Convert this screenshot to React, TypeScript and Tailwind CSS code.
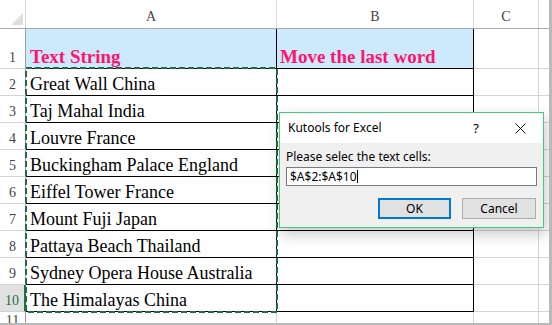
import * as React from 'react';

const rows = [
  'Great Wall China',
  'Taj Mahal India',
  'Louvre France',
  'Buckingham Palace England',
  'Eiffel Tower France',
  'Mount Fuji Japan',
  'Pattaya Beach Thailand',
  'Sydney Opera House Australia',
  'The Himalayas China',
];

function RowHead({ n, active = false }: { n: number; active?: boolean }) {
  return (
    <div
      className={
        active
          ? 'w-[26px] shrink-0 flex items-end justify-center pb-[2px] border-b border-[#d4d4d4] border-r-2 border-r-[#217346] bg-[#e1e1e1] text-[#217346]'
          : 'w-[26px] shrink-0 flex items-end justify-center pb-[2px] border-b border-[#d4d4d4] border-r border-r-[#9f9f9f] text-[#444]'
      }
    >
      <span className="text-[14px] leading-[16px]">{n}</span>
    </div>
  );
}

function Dialog() {
  return (
    <div className="absolute left-[279px] top-[112px] w-[265px] h-[116px] flex flex-col border border-[#3fca7c] bg-[#f0f0f0] shadow-[2px_6px_14px_rgba(0,0,0,0.22)] font-['Noto_Sans',sans-serif] text-[12px] text-black">
      <div className="h-[30px] shrink-0 flex items-center bg-white pl-[8px]">
        <span className="flex-1 leading-none">Kutools for Excel</span>
        <span className="w-[10px] text-center text-[13px] leading-none mr-[34px]">?</span>
        <svg width="11" height="11" viewBox="0 0 11 11" className="mr-[17px]">
          <path d="M0.5 0.5 L10.5 10.5 M10.5 0.5 L0.5 10.5" stroke="#111" strokeWidth="1" />
        </svg>
      </div>
      <div className="flex flex-col px-[6px] pt-[6px]">
        <div className="leading-[16px]">Please selec the text cells:</div>
        <div className="mt-[2px] h-[19px] flex items-center border border-[#7a7a7a] bg-white px-[3px]">
          <span className="leading-none">$A$2:$A$10</span>
          <span className="w-px h-[13px] bg-black" />
        </div>
        <div className="mt-[12px] flex justify-end gap-[11px] pr-px">
          <div className="w-[73px] h-[21px] flex items-center justify-center border-2 border-[#0078d7] bg-[#e1e1e1] leading-none">
            OK
          </div>
          <div className="w-[74px] h-[21px] flex items-center justify-center border border-[#adadad] bg-[#e1e1e1] leading-none">
            Cancel
          </div>
        </div>
      </div>
    </div>
  );
}

export default function App() {
  return (
    <div className="w-[552px] h-[325px] bg-[#b9b9b9] pr-[3px] pb-[2px] overflow-hidden">
      <div className="relative w-full h-full bg-white overflow-hidden font-['Liberation_Serif',serif] text-black">
        {/* column headers */}
        <div className="flex h-[29px] border-b border-[#ababab] text-[#444] text-[14px]">
          <div className="w-[26px] shrink-0 border-r border-[#dadada] relative">
            <div className="absolute left-[11px] top-[13px] w-0 h-0 border-l-[12px] border-l-transparent border-b-[12px] border-b-[#dfdfdf]" />
          </div>
          <div className="w-[251px] shrink-0 flex items-end justify-center pb-[3px] border-r border-[#dadada] leading-[16px]">A</div>
          <div className="w-[197px] shrink-0 flex items-end justify-center pb-[3px] border-r border-[#dadada] leading-[16px]">B</div>
          <div className="w-[65px] shrink-0 flex items-end justify-center pb-[3px] border-r border-[#dadada] leading-[16px]">C</div>
          <div className="flex-1" />
        </div>

        {/* row 1 */}
        <div className="flex h-[40px]">
          <RowHead n={1} />
          <div className="w-[251px] shrink-0 flex items-end pl-[4px] pb-px bg-[#cceafb] border-r border-b border-black text-[#ff1470] font-bold text-[19px] leading-[20px]">
            Text String
          </div>
          <div className="w-[197px] shrink-0 flex items-end pl-[3px] pb-px bg-[#cceafb] border-r border-b border-black text-[#ff1470] font-bold text-[19px] leading-[20px] whitespace-nowrap">
            Move the last word
          </div>
          <div className="w-[65px] shrink-0 border-r border-b border-[#d4d4d4]" />
          <div className="flex-1 border-b border-[#d4d4d4]" />
        </div>

        {/* data rows */}
        {rows.map((text, i) => (
          <div key={i} className="flex h-[27px]">
            <RowHead n={i + 2} active={i === rows.length - 1} />
            <div className="w-[251px] shrink-0 flex items-end pl-[4px] pb-px border-r border-b border-black text-[18px] leading-[20px] whitespace-nowrap">
              {text}
            </div>
            <div className="w-[197px] shrink-0 border-r border-b border-black" />
            <div className="w-[65px] shrink-0 border-r border-b border-[#d4d4d4]" />
            <div className="flex-1 border-b border-[#d4d4d4]" />
          </div>
        ))}

        {/* row 11 */}
        <div className="flex h-[20px]">
          <RowHead n={11} />
          <div className="w-[251px] shrink-0 border-r border-[#d4d4d4]" />
          <div className="w-[197px] shrink-0 border-r border-[#d4d4d4]" />
          <div className="w-[65px] shrink-0 border-r border-[#d4d4d4]" />
          <div className="flex-1" />
        </div>

        {/* copy marquee around A2:A10 */}
        <svg className="absolute left-[25px] top-[67px]" width="253" height="246" shapeRendering="crispEdges">
          <rect x="1" y="1" width="251" height="244" fill="none" stroke="#1f6b45" strokeWidth="2" strokeDasharray="6 3" />
        </svg>

        <Dialog />
      </div>
    </div>
  );
}
